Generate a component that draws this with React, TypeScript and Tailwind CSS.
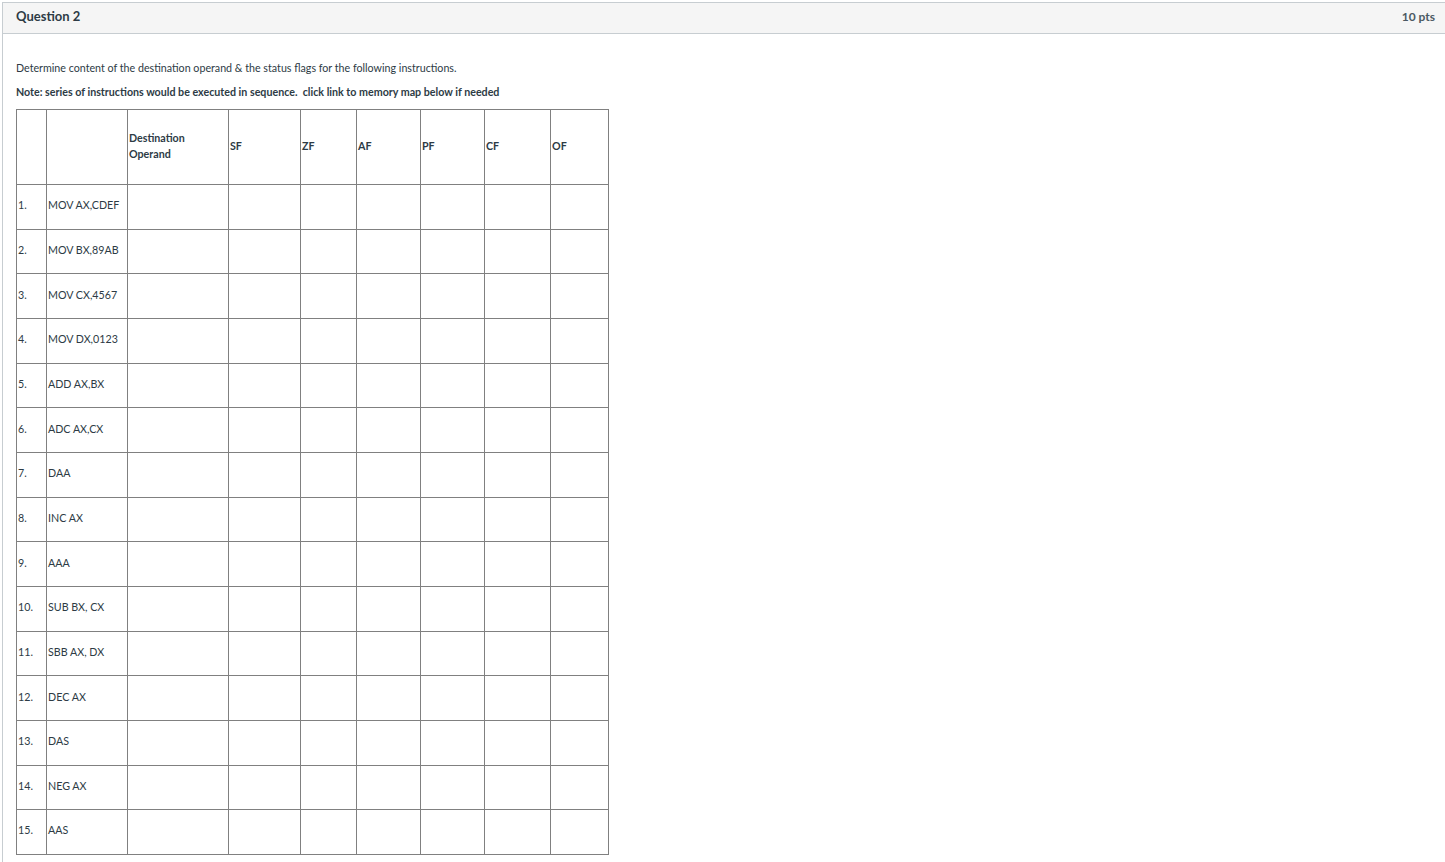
import React from "react";

const rows = [
  "MOV AX,CDEF",
  "MOV BX,89AB",
  "MOV CX,4567",
  "MOV DX,0123",
  "ADD AX,BX",
  "ADC AX,CX",
  "DAA",
  "INC AX",
  "AAA",
  "SUB BX, CX",
  "SBB AX, DX",
  "DEC AX",
  "DAS",
  "NEG AX",
  "AAS",
];

const flags = ["SF", "ZF", "AF", "PF", "CF", "OF"];
const flagWidths = ["w-[72px]", "w-[56px]", "w-[64px]", "w-[64px]", "w-[66px]", "w-[58px]"];

const cell = "border border-[#808080] p-0 pl-[1px] align-middle";

export default function App() {
  return (
    <div className="min-h-[862px] bg-white pt-[2px] pl-[2px] font-['Lato',_'Open_Sans',_sans-serif] text-[#2d3b45]">
      <div className="border-l border-t border-[#c7cdd1] min-h-[860px]">
        {/* question header */}
        <div className="flex h-[31px] items-center justify-between border-b border-[#c7cdd1] bg-[#f5f5f5] pb-[2px] pl-[13px] pr-[10px]">
          <span className="text-[13px] font-bold">Question 2</span>
          <span className="text-[12px] font-bold text-[#4b5963]">10 pts</span>
        </div>

        <div className="pl-[13px] pt-[27px]">
          <p className="text-[10.7px] leading-[14px]">
            Determine content of the destination operand &amp; the status flags for the following instructions.
          </p>
          <p className="mt-[10px] text-[10.7px] font-bold leading-[14px]">
            Note: series of instructions would be executed in sequence.&nbsp; click link to memory map below if needed
          </p>

          <table className="mt-[10px] border-collapse text-[10.7px]">
            <tbody>
              <tr className="h-[75px]">
                <td className={`${cell} w-[30px]`}></td>
                <td className={`${cell} w-[81px]`}></td>
                <td className={`${cell} w-[101px] pb-[2px] font-bold leading-[16px]`}>
                  Destination
                  <br />
                  Operand
                </td>
                {flags.map((f, i) => (
                  <td key={f} className={`${cell} ${flagWidths[i]} pb-[2px] font-bold`}>
                    {f}
                  </td>
                ))}
              </tr>
              {rows.map((r, i) => (
                <tr key={r} className="h-[44.67px]">
                  <td className={`${cell} pb-[3px]`}>{i + 1}.</td>
                  <td className={`${cell} pb-[3px]`}>{r}</td>
                  <td className={cell}></td>
                  {flags.map((f) => (
                    <td key={f} className={cell}></td>
                  ))}
                </tr>
              ))}
            </tbody>
          </table>
        </div>
      </div>
    </div>
  );
}
